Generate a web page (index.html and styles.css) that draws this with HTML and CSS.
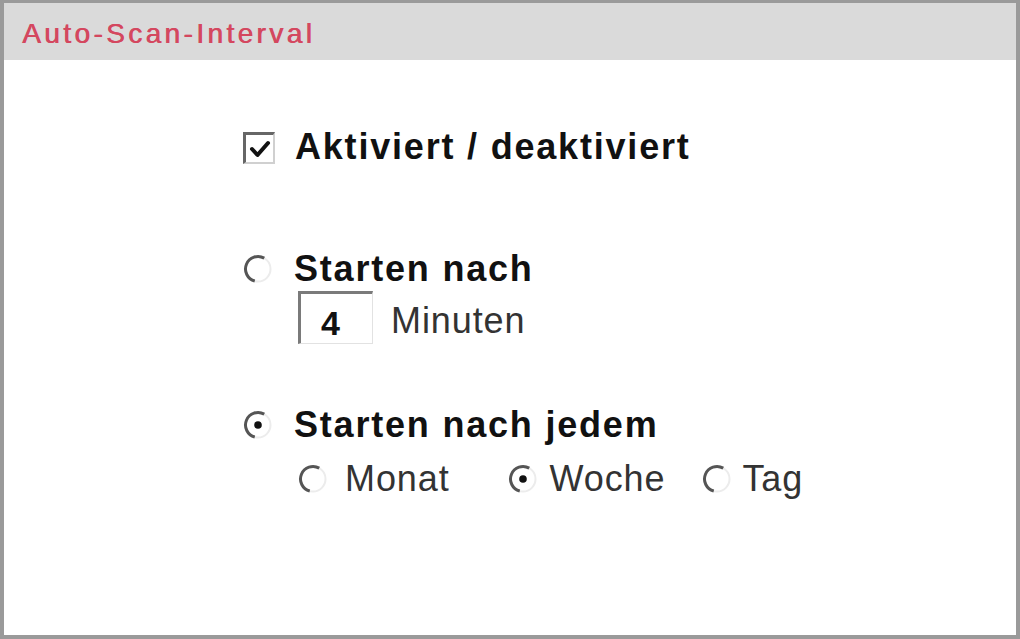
FILE: index.html
```html
<!DOCTYPE html>
<html lang="de">
<head>
<meta charset="utf-8">
<title>Auto-Scan-Interval</title>
<link rel="stylesheet" href="styles.css">
</head>
<body>
<div class="frame">
  <div class="header"><span class="title">Auto-Scan-Interval</span></div>
  <div class="content">
    <div class="row row-check">
      <span class="checkbox">
        <svg width="26" height="26" viewBox="0 0 26 26"><path d="M5 13 L10.5 19 L21 7" fill="none" stroke="#111" stroke-width="4" stroke-linecap="round" stroke-linejoin="round"/></svg>
      </span>
      <span class="label bold">Aktiviert / deaktiviert</span>
    </div>

    <div class="row row-radio1">
      <svg class="radio" width="30" height="30" viewBox="0 0 30 30"><circle cx="15" cy="15" r="12.5" fill="#fff" stroke="#ececec" stroke-width="2"/><path d="M21.25 4.17 A12.5 12.5 0 1 0 11.76 27.07" fill="none" stroke="#555" stroke-width="3"/></svg>
      <span class="label bold">Starten nach</span>
    </div>

    <div class="row row-input">
      <span class="numbox">4</span>
      <span class="label normal">Minuten</span>
    </div>

    <div class="row row-radio2">
      <svg class="radio" width="30" height="30" viewBox="0 0 30 30"><circle cx="15" cy="15" r="12.5" fill="#fff" stroke="#ececec" stroke-width="2"/><path d="M21.25 4.17 A12.5 12.5 0 1 0 11.76 27.07" fill="none" stroke="#555" stroke-width="3"/><circle cx="15" cy="15" r="3.8" fill="#111"/></svg>
      <span class="label bold">Starten nach jedem</span>
    </div>

    <div class="row row-sub">
      <span class="opt opt-monat">
        <svg class="radio" width="30" height="30" viewBox="0 0 30 30"><circle cx="15" cy="15" r="12.5" fill="#fff" stroke="#ececec" stroke-width="2"/><path d="M21.25 4.17 A12.5 12.5 0 1 0 11.76 27.07" fill="none" stroke="#555" stroke-width="3"/></svg>
        <span class="label normal">Monat</span>
      </span>
      <span class="opt opt-woche">
        <svg class="radio" width="30" height="30" viewBox="0 0 30 30"><circle cx="15" cy="15" r="12.5" fill="#fff" stroke="#ececec" stroke-width="2"/><path d="M21.25 4.17 A12.5 12.5 0 1 0 11.76 27.07" fill="none" stroke="#555" stroke-width="3"/><circle cx="15" cy="15" r="3.8" fill="#111"/></svg>
        <span class="label normal">Woche</span>
      </span>
      <span class="opt opt-tag">
        <svg class="radio" width="30" height="30" viewBox="0 0 30 30"><circle cx="15" cy="15" r="12.5" fill="#fff" stroke="#ececec" stroke-width="2"/><path d="M21.25 4.17 A12.5 12.5 0 1 0 11.76 27.07" fill="none" stroke="#555" stroke-width="3"/></svg>
        <span class="label normal">Tag</span>
      </span>
    </div>
  </div>
</div>
</body>
</html>
```
FILE: styles.css
```css
html, body {
  margin: 0;
  padding: 0;
  background: #fff;
}
.frame {
  width: 1020px;
  height: 639px;
  box-sizing: border-box;
  border-top: 3px solid #9a9a9a;
  border-left: 4px solid #9a9a9a;
  border-right: 4px solid #9a9a9a;
  border-bottom: 4px solid #9a9a9a;
  background: #fff;
  font-family: "Liberation Sans", Arial, sans-serif;
  overflow: hidden;
}
.header {
  height: 57px;
  background: #dadada;
  padding-left: 18px;
  box-sizing: border-box;
  padding-top: 3px;
}
.title {
  display: block;
  font-size: 28px;
  line-height: 55px;
  color: #d4475f;
  letter-spacing: 3.4px;
  text-shadow: 0.7px 0 0 #d4475f;
}
.content {
  padding-left: 239px;
  display: flex;
  flex-direction: column;
}
.row {
  display: flex;
  align-items: center;
  height: 40px;
}
.label {
  font-size: 36px;
  line-height: 40px;
  white-space: nowrap;
}
.bold {
  font-weight: bold;
  color: #111;
  letter-spacing: 1.8px;
}
.normal {
  color: #333;
  letter-spacing: 0.9px;
}
.row-check {
  margin-top: 67px;
}
.checkbox {
  width: 32px;
  height: 32px;
  box-sizing: border-box;
  border-top: 3px solid #666;
  border-left: 3px solid #666;
  border-right: 2px solid #d0d0d0;
  border-bottom: 2px solid #d0d0d0;
  display: flex;
  align-items: center;
  justify-content: center;
  margin-top: 2px;
  margin-right: 20px;
  background: #fff;
}
.radio {
  flex: none;
  display: block;
}
.row-radio1 {
  margin-top: 82px;
}
.row-radio1 .radio,
.row-radio2 .radio {
  margin-right: 21px;
}
.row-input {
  height: 53px;
  margin-top: 2px;
  padding-left: 55px;
  align-items: stretch;
}
.numbox {
  width: 75px;
  height: 53px;
  box-sizing: border-box;
  border-top: 3px solid #7a7a7a;
  border-left: 3px solid #7a7a7a;
  border-right: 1px solid #e2e2e2;
  border-bottom: 1px solid #e2e2e2;
  font-size: 34px;
  font-weight: bold;
  color: #111;
  padding-left: 20px;
  line-height: 58px;
  margin-right: 18px;
}
.row-input .label {
  line-height: 60px;
}
.row-radio2 {
  margin-top: 61px;
}
.row-sub {
  margin-top: 14px;
  padding-left: 55px;
}
.opt {
  display: flex;
  align-items: center;
}
.opt-monat .radio { margin-right: 17px; }
.opt-monat { margin-right: 58px; }
.opt-woche .radio { margin-right: 12px; }
.opt-woche { margin-right: 37px; }
.opt-tag .radio { margin-right: 10px; }
```
